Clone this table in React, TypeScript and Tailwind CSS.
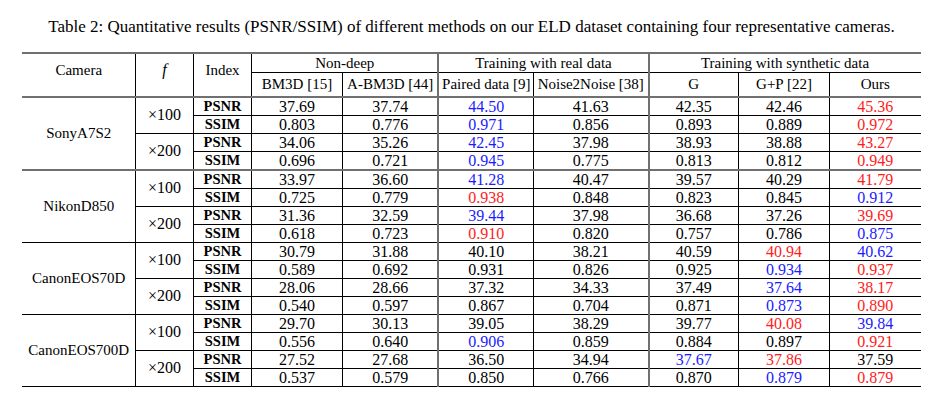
import React from "react";

type Cam = { name: string; rows: string[][] };

const cams: Cam[] = [
  {
    name: "SonyA7S2",
    rows: [
      ["37.69", "37.74", "44.50b", "41.63", "42.35", "42.46", "45.36r"],
      ["0.803", "0.776", "0.971b", "0.856", "0.893", "0.889", "0.972r"],
      ["34.06", "35.26", "42.45b", "37.98", "38.93", "38.88", "43.27r"],
      ["0.696", "0.721", "0.945b", "0.775", "0.813", "0.812", "0.949r"],
    ],
  },
  {
    name: "NikonD850",
    rows: [
      ["33.97", "36.60", "41.28b", "40.47", "39.57", "40.29", "41.79r"],
      ["0.725", "0.779", "0.938r", "0.848", "0.823", "0.845", "0.912b"],
      ["31.36", "32.59", "39.44b", "37.98", "36.68", "37.26", "39.69r"],
      ["0.618", "0.723", "0.910r", "0.820", "0.757", "0.786", "0.875b"],
    ],
  },
  {
    name: "CanonEOS70D",
    rows: [
      ["30.79", "31.88", "40.10", "38.21", "40.59", "40.94r", "40.62b"],
      ["0.589", "0.692", "0.931", "0.826", "0.925", "0.934b", "0.937r"],
      ["28.06", "28.66", "37.32", "34.33", "37.49", "37.64b", "38.17r"],
      ["0.540", "0.597", "0.867", "0.704", "0.871", "0.873b", "0.890r"],
    ],
  },
  {
    name: "CanonEOS700D",
    rows: [
      ["29.70", "30.13", "39.05", "38.29", "39.77", "40.08r", "39.84b"],
      ["0.556", "0.640", "0.906b", "0.859", "0.884", "0.897", "0.921r"],
      ["27.52", "27.68", "36.50", "34.94", "37.67b", "37.86r", "37.59"],
      ["0.537", "0.579", "0.850", "0.766", "0.870", "0.879b", "0.879r"],
    ],
  },
];

function colour(v: string) {
  if (v.endsWith("b")) return "text-[#1c1cff]";
  if (v.endsWith("r")) return "text-[#ff1c1c]";
  return "text-black";
}

function clean(v: string) {
  return v.replace(/[br]$/, "");
}

export default function App() {
  return (
    <div className="w-[943px] h-[405px] bg-white pt-[17px] [font-family:'Liberation_Serif','Times_New_Roman',serif] text-black">
      <p className="text-center text-[17px] leading-[20px]">
        Table 2: Quantitative results (PSNR/SSIM) of different methods on our ELD dataset containing four representative cameras.
      </p>
      <table className="mx-auto mt-[15px] w-[898px] table-fixed border-collapse">
        <colgroup>
          <col className="w-[113px]" />
          <col className="w-[58px]" />
          <col className="w-[58px]" />
          <col className="w-[91px]" />
          <col className="w-[96px]" />
          <col className="w-[95px]" />
          <col className="w-[115px]" />
          <col className="w-[90px]" />
          <col className="w-[91px]" />
          <col className="w-[91px]" />
        </colgroup>
        <thead>
          <tr className="h-[19px]">
            <th rowSpan={2} className="p-0 pb-[9px] align-middle text-[15px] font-normal border-t-2 border-t-[#707070] border-b-2 border-b-[#707070] border-r border-r-black">
              Camera
            </th>
            <th rowSpan={2} className="p-0 pb-[9px] align-middle text-[16px] font-normal italic border-t-2 border-t-[#707070] border-b-2 border-b-[#707070] border-r border-r-black">
              f
            </th>
            <th rowSpan={2} className="p-0 pb-[9px] align-middle text-[15px] font-normal border-t-2 border-t-[#707070] border-b-2 border-b-[#707070] border-r border-r-black">
              Index
            </th>
            <th colSpan={2} className="p-0 h-[19px] leading-[18px] text-[15px] font-normal border-t-2 border-t-[#707070] border-b border-b-black border-r-2 border-r-[#707070]">
              Non-deep
            </th>
            <th colSpan={2} className="p-0 h-[19px] leading-[18px] text-[15px] font-normal border-t-2 border-t-[#707070] border-b border-b-black border-r-2 border-r-[#707070]">
              Training with real data
            </th>
            <th colSpan={3} className="p-0 h-[19px] leading-[18px] text-[15px] font-normal border-t-2 border-t-[#707070] border-b border-b-black">
              Training with synthetic data
            </th>
          </tr>
          <tr className="h-[23px]">
            <th className="p-0 h-[23px] text-[15px] font-normal whitespace-nowrap border-b-2 border-b-[#707070] border-r border-r-black">BM3D [15]</th>
            <th className="p-0 h-[23px] text-[15px] font-normal whitespace-nowrap border-b-2 border-b-[#707070] border-r-2 border-r-[#707070]">A-BM3D [44]</th>
            <th className="p-0 h-[23px] text-[15px] font-normal whitespace-nowrap border-b-2 border-b-[#707070] border-r border-r-black">Paired data [9]</th>
            <th className="p-0 h-[23px] text-[15px] font-normal whitespace-nowrap border-b-2 border-b-[#707070] border-r-2 border-r-[#707070]">Noise2Noise [38]</th>
            <th className="p-0 h-[23px] text-[15px] font-normal whitespace-nowrap border-b-2 border-b-[#707070] border-r border-r-black">G</th>
            <th className="p-0 h-[23px] text-[15px] font-normal whitespace-nowrap border-b-2 border-b-[#707070] border-r border-r-black">G+P [22]</th>
            <th className="p-0 h-[23px] text-[15px] font-normal whitespace-nowrap border-b-2 border-b-[#707070]">Ours</th>
          </tr>
        </thead>
        <tbody>
          {cams.map((cam, c) =>
            cam.rows.map((vals, i) => {
              const r = c * 4 + i;
              const grayLine = r === 3;
              const bottom = grayLine
                ? "border-b-2 border-b-[#707070]"
                : "border-b border-b-black";
              return (
                <tr key={r} className="h-[18px]">
                  {i === 0 && (
                    <td
                      rowSpan={4}
                      className={`p-0 text-center align-middle text-[15px] border-r border-r-black ${
                        c === 0 ? "border-b-2 border-b-[#707070]" : "border-b border-b-black"
                      }`}
                    >
                      {cam.name}
                    </td>
                  )}
                  {i % 2 === 0 && (
                    <td
                      rowSpan={2}
                      className={`p-0 text-center align-middle text-[16px] border-r border-r-black ${
                        c === 0 && i === 2 ? "border-b-2 border-b-[#707070]" : "border-b border-b-black"
                      }`}
                    >
                      ×{i === 0 ? "100" : "200"}
                    </td>
                  )}
                  <td className={`p-0 h-[18px] leading-[17px] text-center text-[14.5px] font-bold border-r border-r-black ${bottom}`}>
                    {i % 2 === 0 ? "PSNR" : "SSIM"}
                  </td>
                  {vals.map((v, k) => (
                    <td
                      key={k}
                      className={`p-0 h-[18px] leading-[17px] text-center text-[16px] ${colour(v)} ${bottom} ${
                        k === 1 || k === 3
                          ? "border-r-2 border-r-[#707070]"
                          : k === 6
                          ? ""
                          : "border-r border-r-black"
                      }`}
                    >
                      {clean(v)}
                    </td>
                  ))}
                </tr>
              );
            })
          )}
        </tbody>
      </table>
    </div>
  );
}
